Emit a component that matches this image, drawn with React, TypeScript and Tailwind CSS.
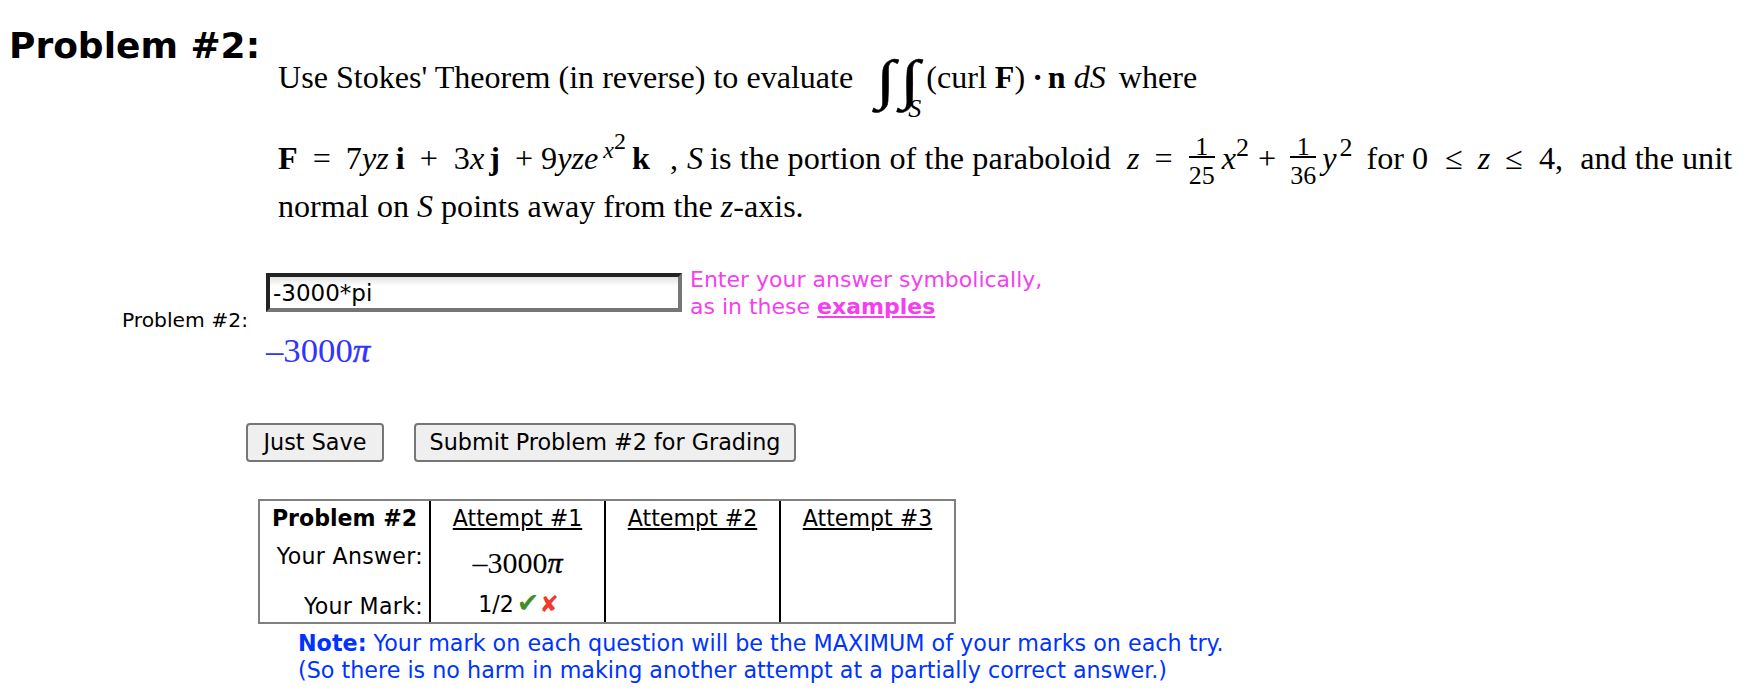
const serif = "font-['Liberation_Serif',serif]";

function Frac({ top, bottom }: { top: string; bottom: string }) {
  return (
    <span className="relative -top-[14px] flex flex-col items-center w-[26px] text-[26px]">
      <span className="w-full text-center border-b-[2px] border-black leading-[18px]">{top}</span>
      <span className="leading-[26px] pt-[5px]">{bottom}</span>
    </span>
  );
}

function Statement() {
  return (
    <div className={`${serif} text-[32.1px] text-black pl-[278px]`}>
      <div className="flex items-baseline h-[62px] whitespace-nowrap">
        <span>Use Stokes' Theorem (in reverse) to evaluate</span>
        <span className="relative flex ml-[23px] w-[46px]">
          <span className="text-[70px] leading-[37px] tracking-[5px] scale-y-[0.78] translate-y-[5px] origin-[50%_66px] [-webkit-text-stroke:0.6px_black]">∫∫</span>
          <i className="absolute left-[32px] top-[50px] text-[26px] leading-[26px]">S</i>
        </span>
        <span className="ml-[4px]">(curl <b>F</b>)</span>
        <b className="ml-[7px]">·</b>
        <b className="ml-[5px]">n</b>
        <i className="ml-[8px]">dS</i>
        <span className="ml-[13px]">where</span>
      </div>
      <div className="flex items-baseline h-[74px] pt-[26px] whitespace-nowrap text-[32.2px]">
        <b>F</b>
        <span className="ml-[15px]">=</span>
        <span className="ml-[15px]">7<i>yz</i></span>
        <b className="ml-[7px]">i</b>
        <span className="ml-[15px]">+</span>
        <span className="ml-[16px]">3<i>x</i></span>
        <b className="ml-[5px]">j</b>
        <span className="ml-[15px]">+</span>
        <span className="ml-[8px]">9<i>yze</i></span>
        <i className="relative -top-[11px] ml-[5px] text-[24px]">x</i>
        <span className="relative -top-[20px] text-[24px]">2</span>
        <b className="ml-[6px]">k</b>
        <span className="ml-[20px]">,</span>
        <i className="ml-[9px]">S</i>
        <span className="ml-[7px] tracking-[0.1px]">is the portion of the paraboloid</span>
        <i className="ml-[16px]">z</i>
        <span className="ml-[15px]">=</span>
        <span className="ml-[16px]"><Frac top="1" bottom="25" /></span>
        <i className="ml-[7px]">x</i>
        <span className="relative -top-[13px] text-[26px]">2</span>
        <span className="ml-[9px]">+</span>
        <span className="ml-[14px]"><Frac top="1" bottom="36" /></span>
        <i className="ml-[6px]">y</i>
        <span className="relative -top-[13px] ml-[3px] text-[26px]">2</span>
        <span className="ml-[14px]">for 0</span>
        <span className="ml-[17px]">≤</span>
        <i className="ml-[15px]">z</i>
        <span className="ml-[15px]">≤</span>
        <span className="ml-[16px]">4,</span>
        <span className="ml-[17px]">and the unit</span>
      </div>
      <div className="h-[48px] leading-[48px] whitespace-nowrap">
        normal on <i>S</i> points away from the <i>z</i>-axis.
      </div>
    </div>
  );
}

function AnswerRow() {
  return (
    <div className="flex items-center mt-[43px]">
      <div className="w-[248px] pb-[4px] text-right text-[20.3px] leading-[24px]">Problem #2:</div>
      <div className="ml-[18px] flex flex-col">
        <div className="flex items-start">
          <input
            readOnly
            value="-3000*pi"
            className="w-[416px] h-[39px] border-[4px] border-t-[#232323] border-l-[#232323] border-r-[#767676] border-b-[#767676] bg-gradient-to-b from-[#e4e4e4] via-white via-30% to-white px-[3px] text-[23px] text-black outline-none"
          />
          <div className="ml-[8px] -mt-[7px] text-[22px] leading-[27px] text-[#f43ff0]">
            Enter your answer symbolically,
            <br />
            as in these <b className="underline">examples</b>
          </div>
        </div>
        <div className={`${serif} text-[34.7px] leading-[40px] text-[#3333ff] mt-[11px]`}>
          –3000<i className="[-webkit-text-stroke:0.5px_#3333ff]">π</i>
        </div>
      </div>
    </div>
  );
}

function Attempts() {
  const cell = "border-r-[2px] border-black text-center align-top";
  return (
    <table className="ml-[258px] mt-[37px] w-[698px] h-[125px] table-fixed border-[2px] border-[#808080] text-[22.1px] leading-[30px] border-separate border-spacing-0">
      <colgroup>
        <col className="w-[171px]" />
        <col className="w-[175px]" />
        <col className="w-[175px]" />
        <col />
      </colgroup>
      <tbody>
        <tr className="h-[36px]">
          <td className={`${cell} font-bold pt-[2px]`}>Problem #2</td>
          <td className={`${cell} underline pt-[2px]`}>Attempt #1</td>
          <td className={`${cell} underline pt-[2px]`}>Attempt #2</td>
          <td className="text-center underline align-top pt-[2px]">Attempt #3</td>
        </tr>
        <tr className="h-[50px]">
          <td className="border-r-[2px] border-black text-right align-top pr-[6px] pt-[4px] tracking-[0.3px]">Your Answer:</td>
          <td className={`${cell} ${serif} text-[30px] pt-[11px]`}>–3000<i className="[-webkit-text-stroke:0.5px_black]">π</i></td>
          <td className={cell} />
          <td />
        </tr>
        <tr>
          <td className="border-r-[2px] border-black text-right pr-[6px] pt-[2px] tracking-[0.3px]">Your Mark:</td>
          <td className={`${cell} pt-[2px] pl-[2px]`}>
            1/2
            <span className="ml-[3px] text-[27px] leading-[24px] text-[#3f8f2c]">✔</span>
            <span className="text-[23px] leading-[24px] text-[#f03a2c]">✘</span>
          </td>
          <td className={cell} />
          <td />
        </tr>
      </tbody>
    </table>
  );
}

export default function App() {
  return (
    <div className="w-[1758px] h-[700px] overflow-hidden bg-white text-black font-['DejaVu_Sans',sans-serif]">
      <h1 className="pl-[9px] pt-[24px] text-[36px] leading-[44px] font-bold">Problem #2:</h1>
      <div className="-mt-[22px]">
        <Statement />
      </div>
      <AnswerRow />
      <div className="flex gap-[30px] ml-[246px] mt-[52px] text-[22.3px] text-black">
        <button className="w-[138px] h-[39px] border-[2px] border-[#767676] rounded-[4px] bg-[#efefef]">Just Save</button>
        <button className="w-[382px] h-[39px] border-[2px] border-[#767676] rounded-[4px] bg-[#efefef]">Submit Problem #2 for Grading</button>
      </div>
      <Attempts />
      <div className="ml-[298px] mt-[6px] text-[22.25px] leading-[27px] text-[#0033ff]">
        <b>Note:</b> Your mark on each question will be the MAXIMUM of your marks on each try.
        <br />
        (So there is no harm in making another attempt at a partially correct answer.)
      </div>
    </div>
  );
}
